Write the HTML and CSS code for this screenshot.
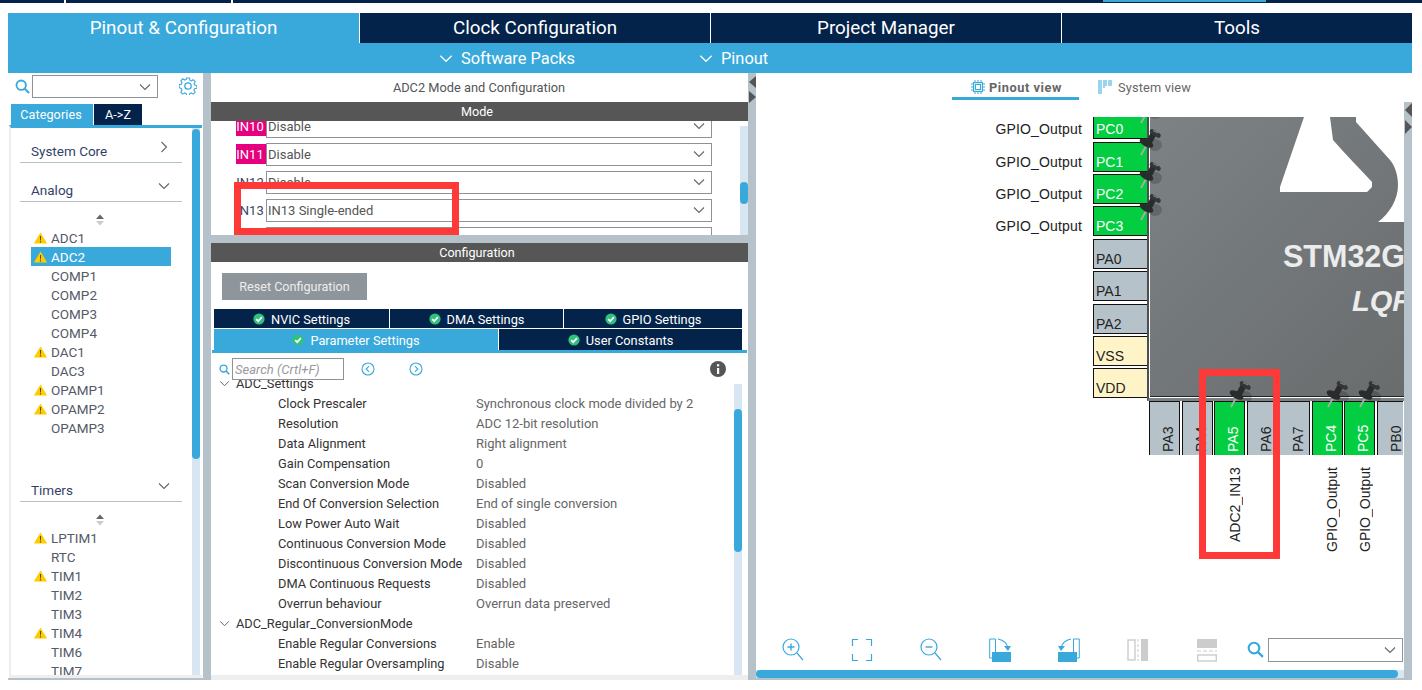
FILE: index.html
```html
<!DOCTYPE html>
<html lang="en">
<head>
<meta charset="utf-8">
<title>STM32CubeMX</title>
<link rel="stylesheet" href="styles.css">
</head>
<body>
<svg class="defs" width="0" height="0" aria-hidden="true">
  <symbol id="warn" viewBox="0 0 14 12"><path d="M7 .5 13.6 11.5H.4Z" fill="#fc0"/><path d="M6.4 4h1.2l-.2 4.4h-.8ZM6.4 9.2h1.2v1.2H6.4Z" fill="#5a4a00"/></symbol>
  <symbol id="check" viewBox="0 0 12 12"><circle cx="6" cy="6" r="5.6" fill="#2fc27a"/><path d="M3.2 6.2 5.2 8.2 8.9 4.2" fill="none" stroke="#fff" stroke-width="1.7"/></symbol>
  <symbol id="chev" viewBox="0 0 12 8"><path d="M1 1.5 6 6.5 11 1.5" fill="none" stroke="currentColor" stroke-width="1.1"/></symbol>
  <symbol id="mag" viewBox="0 0 16 16"><circle cx="6.6" cy="6.6" r="5" fill="none" stroke="#39a9dc" stroke-width="2"/><path d="M10.4 10.4 15 15" stroke="#39a9dc" stroke-width="2.2"/></symbol>
  <symbol id="sort" viewBox="0 0 10 12"><path d="M5 .5 9 5H1Z" fill="#666"/><path d="M5 11.500 9 7H1Z" fill="#ccc"/></symbol>
  <symbol id="push" viewBox="0 0 24 28"><ellipse cx="17" cy="17" rx="7" ry="6" fill="#000" opacity=".18"/><path d="M3 27 8 18" stroke="#a6ada8" stroke-width="1.8"/><path d="M16 5 10.500 15" stroke="#2a2c2c" stroke-width="6"/><ellipse cx="8.500" cy="15" rx="7.500" ry="3.600" transform="rotate(28 8.500 15)" fill="#2a2c2c"/><path d="M14 3.500 20.500 7.500" stroke="#333737" stroke-width="4.600" stroke-linecap="round"/><path d="M15 2.600 20 5" stroke="#8b9090" stroke-width="1"/></symbol>
</svg>

<div class="topstrip"><span class="topmark topmark-a"></span><span class="topmark topmark-b"></span><span class="topstrip-active"></span></div>

<nav class="tabs">
  <div class="tab tab-on">Pinout &amp; Configuration</div>
  <div class="tab">Clock Configuration</div>
  <div class="tab">Project Manager</div>
  <div class="tab">Tools</div>
</nav>
<div class="subbar">
  <span class="sub sub-packs"><svg class="sub-chev"><use href="#chev"/></svg>Software Packs</span>
  <span class="sub"><svg class="sub-chev"><use href="#chev"/></svg>Pinout</span>
</div>

<main class="workspace">
  <aside class="side">
    <div class="side-search">
      <svg class="side-mag"><use href="#mag"/></svg>
      <div class="combo combo-side"><svg class="combo-chev"><use href="#chev"/></svg></div>
      <svg class="gear" viewBox="0 0 18 18"><path d="M7.6 1h2.8l.4 2.2 1.5.7 1.9-1.2 2 2-1.2 1.9.7 1.5 2.2.4v2.8l-2.2.4-.7 1.5 1.2 1.9-2 2-1.9-1.2-1.5.7-.4 2.2H7.600l-.4-2.2-1.500-.7-1.900 1.200-2-2 1.200-1.900-.7-1.500L.1 10.400V7.600l2.200-.4.7-1.500-1.200-1.900 2-2 1.900 1.200 1.500-.7Z" fill="none" stroke="#39a9dc" stroke-width="1.1"/><circle cx="9" cy="9" r="3.2" fill="none" stroke="#39a9dc" stroke-width="1.3"/></svg>
    </div>
    <div class="side-tabs"><span class="stab stab-on">Categories</span><span class="stab">A-&gt;Z</span></div>
    <div class="side-body">
      <div class="side-list">
        <div class="cat cat-first">System Core<svg class="cat-right" viewBox="0 0 8 12"><path d="M1.500 1 6.500 6 1.500 11" fill="none" stroke="#666" stroke-width="1.1"/></svg></div>
        <div class="cat">Analog<svg class="cat-down"><use href="#chev"/></svg></div>
        <svg class="sorter"><use href="#sort"/></svg>
        <ul class="items">
          <li class="item"><svg class="warn"><use href="#warn"/></svg>ADC1</li>
          <li class="item item-on"><svg class="warn"><use href="#warn"/></svg>ADC2</li>
          <li class="item">COMP1</li>
          <li class="item">COMP2</li>
          <li class="item">COMP3</li>
          <li class="item">COMP4</li>
          <li class="item"><svg class="warn"><use href="#warn"/></svg>DAC1</li>
          <li class="item">DAC3</li>
          <li class="item"><svg class="warn"><use href="#warn"/></svg>OPAMP1</li>
          <li class="item"><svg class="warn"><use href="#warn"/></svg>OPAMP2</li>
          <li class="item">OPAMP3</li>
        </ul>
        <div class="cat cat-timers">Timers<svg class="cat-down"><use href="#chev"/></svg></div>
        <svg class="sorter"><use href="#sort"/></svg>
        <ul class="items">
          <li class="item"><svg class="warn"><use href="#warn"/></svg>LPTIM1</li>
          <li class="item">RTC</li>
          <li class="item"><svg class="warn"><use href="#warn"/></svg>TIM1</li>
          <li class="item">TIM2</li>
          <li class="item">TIM3</li>
          <li class="item"><svg class="warn"><use href="#warn"/></svg>TIM4</li>
          <li class="item">TIM6</li>
          <li class="item">TIM7</li>
        </ul>
      </div>
      <div class="vscroll vscroll-side"><span class="thumb thumb-side"></span></div>
    </div>
  </aside>

  <div class="splitter"></div>

  <section class="mid">
    <div class="mid-title">ADC2 Mode and Configuration</div>
    <div class="bar">Mode</div>
    <div class="mode">
      <div class="mode-rows">
        <div class="mode-row"><span class="in in-on">IN10</span><div class="combo combo-mode">Disable<svg class="combo-chev"><use href="#chev"/></svg></div></div>
        <div class="mode-row"><span class="in in-on">IN11</span><div class="combo combo-mode">Disable<svg class="combo-chev"><use href="#chev"/></svg></div></div>
        <div class="mode-row"><span class="in">IN12</span><div class="combo combo-mode">Disable<svg class="combo-chev"><use href="#chev"/></svg></div></div>
        <div class="mode-row"><span class="in">IN13</span><div class="combo combo-mode">IN13 Single-ended<svg class="combo-chev"><use href="#chev"/></svg></div></div>
        <div class="mode-row"><span class="in"></span><div class="combo combo-mode"></div></div>
      </div>
      <div class="vscroll vscroll-mode"><span class="thumb thumb-mode"></span></div>
    </div>
    <div class="hsplit"></div>
    <div class="bar">Configuration</div>
    <div class="reset-wrap"><button class="reset" type="button">Reset Configuration</button></div>
    <div class="ctabs ctabs-top">
      <span class="ctab ctab-a"><svg class="check"><use href="#check"/></svg>NVIC Settings</span>
      <span class="ctab ctab-b"><svg class="check"><use href="#check"/></svg>DMA Settings</span>
      <span class="ctab ctab-c"><svg class="check"><use href="#check"/></svg>GPIO Settings</span>
    </div>
    <div class="ctabs ctabs-bottom">
      <span class="ctab ctab-d ctab-on"><svg class="check"><use href="#check"/></svg>Parameter Settings</span>
      <span class="ctab ctab-e"><svg class="check"><use href="#check"/></svg>User Constants</span>
    </div>
    <div class="csearch">
      <svg class="csearch-mag"><use href="#mag"/></svg>
      <div class="cinput">Search (Crtl+F)</div>
      <svg class="nav-circle nav-prev" viewBox="0 0 14 14"><circle cx="7" cy="7" r="6" fill="none" stroke="#39a9dc" stroke-width="1.1"/><path d="M8 4.200 5.200 7 8 9.800" fill="none" stroke="#39a9dc" stroke-width="1.1"/></svg>
      <svg class="nav-circle nav-next" viewBox="0 0 14 14"><circle cx="7" cy="7" r="6" fill="none" stroke="#39a9dc" stroke-width="1.1"/><path d="M6 4.200 8.800 7 6 9.800" fill="none" stroke="#39a9dc" stroke-width="1.1"/></svg>
      <svg class="info" viewBox="0 0 16 16"><circle cx="8" cy="8" r="8" fill="#555655"/><rect x="7" y="7" width="2.200" height="6" fill="#fff"/><rect x="7" y="3.200" width="2.200" height="2.200" fill="#fff"/></svg>
    </div>
    <div class="tree-wrap">
      <div class="tree">
        <div class="sec"><svg class="sec-chev"><use href="#chev"/></svg>ADC_Settings</div>
        <div class="prop"><span>Clock Prescaler</span><span class="val">Synchronous clock mode divided by 2</span></div>
        <div class="prop"><span>Resolution</span><span class="val">ADC 12-bit resolution</span></div>
        <div class="prop"><span>Data Alignment</span><span class="val">Right alignment</span></div>
        <div class="prop"><span>Gain Compensation</span><span class="val">0</span></div>
        <div class="prop"><span>Scan Conversion Mode</span><span class="val">Disabled</span></div>
        <div class="prop"><span>End Of Conversion Selection</span><span class="val">End of single conversion</span></div>
        <div class="prop"><span>Low Power Auto Wait</span><span class="val">Disabled</span></div>
        <div class="prop"><span>Continuous Conversion Mode</span><span class="val">Disabled</span></div>
        <div class="prop"><span>Discontinuous Conversion Mode</span><span class="val">Disabled</span></div>
        <div class="prop"><span>DMA Continuous Requests</span><span class="val">Disabled</span></div>
        <div class="prop"><span>Overrun behaviour</span><span class="val">Overrun data preserved</span></div>
        <div class="sec"><svg class="sec-chev"><use href="#chev"/></svg>ADC_Regular_ConversionMode</div>
        <div class="prop"><span>Enable Regular Conversions</span><span class="val">Enable</span></div>
        <div class="prop"><span>Enable Regular Oversampling</span><span class="val">Disable</span></div>
      </div>
      <div class="vscroll vscroll-tree"><span class="thumb thumb-tree"></span></div>
    </div>
  </section>

  <div class="splitter"><span class="arrow arrow-l"></span><span class="arrow arrow-r"></span></div>

  <section class="view">
    <div class="view-main">
      <div class="view-tabs">
        <span class="vtab vtab-on">
          <svg class="vicon" viewBox="0 0 14 14"><rect x="2.500" y="2.500" width="9" height="9" fill="#d4ecf8" stroke="#39a9dc"/><rect x="4.500" y="4.500" width="5" height="5" fill="#fff" stroke="#39a9dc"/><path d="M4 0v2M7 0v2M10 0v2M4 12v2M7 12v2M10 12v2M0 4h2M0 7h2M0 10h2M12 4h2M12 7h2M12 10h2" stroke="#39a9dc"/></svg>Pinout view</span>
        <span class="vtab">
          <svg class="vicon" viewBox="0 0 14 14"><path d="M0 1h4M0 3h4M0 5h4M0 7h4M0 9h4M0 11h4M0 13h4M5 1h4M5 3h4M5 5h4M5 7h2M10 1h4M10 3h4M10 5h4" stroke="#39a9dc"/></svg>System view</span>
      </div>
      <div class="canvas">
        <div class="chip">
          <svg class="chip-logo" viewBox="0 0 124 105"><path d="M24 0H50L53 23C66 38 80 52 92 65V70L87 75H0V70Z" fill="#fff"/><path d="M76 0V5L110 43C116 50 118 60 118 68 118 82 110 96 98 105H124V0Z" fill="#fff"/></svg>
          <div class="chip-name">STM32G4</div>
          <div class="chip-pkg">LQFP64</div>
        </div>
        <div class="lpins">
          <div class="lrow"><span class="plabel">GPIO_Output</span><span class="pin pin-on">PC0</span></div>
          <div class="lrow"><span class="plabel">GPIO_Output</span><span class="pin pin-on">PC1</span></div>
          <div class="lrow"><span class="plabel">GPIO_Output</span><span class="pin pin-on">PC2</span></div>
          <div class="lrow"><span class="plabel">GPIO_Output</span><span class="pin pin-on">PC3</span></div>
          <div class="lrow"><span class="pin">PA0</span></div>
          <div class="lrow"><span class="pin">PA1</span></div>
          <div class="lrow"><span class="pin">PA2</span></div>
          <div class="lrow"><span class="pin pin-pwr">VSS</span></div>
          <div class="lrow"><span class="pin pin-pwr">VDD</span></div>
        </div>
        <div class="bpins">
          <div class="bcol"><span class="bpin">PA3</span></div>
          <div class="bcol"><span class="bpin">PA4</span></div>
          <div class="bcol"><span class="bpin pin-on">PA5</span><span class="blabel">ADC2_IN13</span></div>
          <div class="bcol"><span class="bpin">PA6</span></div>
          <div class="bcol"><span class="bpin">PA7</span></div>
          <div class="bcol"><span class="bpin pin-on">PC4</span><span class="blabel">GPIO_Output</span></div>
          <div class="bcol"><span class="bpin pin-on">PC5</span><span class="blabel">GPIO_Output</span></div>
          <div class="bcol"><span class="bpin">PB0</span></div>
        </div>
        <svg class="pushpin pp0"><use href="#push"/></svg>
        <svg class="pushpin pp1"><use href="#push"/></svg>
        <svg class="pushpin pp2"><use href="#push"/></svg>
        <svg class="pushpin pp3"><use href="#push"/></svg>
        <svg class="pushpin pp4"><use href="#push"/></svg>
        <svg class="pushpin pp5"><use href="#push"/></svg>
        <svg class="pushpin pp6"><use href="#push"/></svg>
      </div>
      <div class="tools">
        <svg class="tool" viewBox="0 0 22 24"><circle cx="9" cy="9" r="8" fill="none" stroke="#39a9dc" stroke-width="1.200"/><path d="M9 5.500v7M5.500 9h7" stroke="#39a9dc" stroke-width="1.400"/><path d="M15 15 21 22" stroke="#39a9dc" stroke-width="1.200"/></svg>
        <svg class="tool" viewBox="0 0 22 24"><path d="M7 1.500H1.500V8M15 1.500h5.500V8M7 22.500H1.500V16M15 22.500h5.500V16" fill="none" stroke="#39a9dc" stroke-width="1.200"/></svg>
        <svg class="tool" viewBox="0 0 22 24"><circle cx="9" cy="9" r="8" fill="none" stroke="#39a9dc" stroke-width="1.200"/><path d="M5.500 9h7" stroke="#39a9dc" stroke-width="1.400"/><path d="M15 15 21 22" stroke="#39a9dc" stroke-width="1.200"/></svg>
        <svg class="tool" viewBox="0 0 22 24"><path d="M.7 1H6.500V20H.7Z" fill="none" stroke="#39a9dc"/><path d="M3 14H22V24H3Z" fill="#39a9dc"/><path d="M9 1C14 2 18 5 19 10" fill="none" stroke="#39a9dc" stroke-width="1.200"/><path d="M15 8h7l-3 5Z" fill="#39a9dc"/></svg>
        <svg class="tool" viewBox="0 0 22 24"><path d="M15.500 1H21.300V20H15.500Z" fill="none" stroke="#39a9dc"/><path d="M0 14H19V24H0Z" fill="#39a9dc"/><path d="M13 1C8 2 4 5 3 10" fill="none" stroke="#39a9dc" stroke-width="1.200"/><path d="M0 8h7l-4 5Z" fill="#39a9dc"/></svg>
        <svg class="tool" viewBox="0 0 22 24"><rect x="1" y="2" width="7" height="20" fill="none" stroke="#ccc" stroke-width="1.400"/><path d="M11 1v22" stroke="#ccc" stroke-dasharray="3 2"/><rect x="14" y="1" width="7" height="22" fill="#ccc"/></svg>
        <svg class="tool" viewBox="0 0 22 24"><rect x="1" y="1" width="20" height="9" fill="#ccc"/><path d="M1 13h20" stroke="#ccc" stroke-dasharray="4 2"/><rect x="1.700" y="17" width="18.600" height="6" fill="none" stroke="#ccc" stroke-width="1.400"/></svg>
        <svg class="tools-mag"><use href="#mag"/></svg>
        <div class="combo combo-tools"><svg class="combo-chev"><use href="#chev"/></svg></div>
      </div>
      <div class="hscroll"><span class="hthumb"></span></div>
    </div>
    <div class="view-edge"><span class="arrow edge-l"></span><span class="arrow edge-r"></span></div>
  </section>
</main>

<div class="callout callout-mode"></div>
<div class="callout callout-pin"></div>
</body>
</html>
```
FILE: styles.css
```css
* { box-sizing: border-box; }
html, body { margin: 0; padding: 0; }
body {
  position: relative;
  width: 1422px;
  height: 690px;
  overflow: hidden;
  background: #fff;
  font-family: Roboto, "Liberation Sans", sans-serif;
  font-size: 13px;
  color: #555;
}
.defs { position: absolute; }
svg { display: block; flex: none; }

.topstrip { position: relative; height: 3px; background: #03234b; padding-left: 1103px; margin-bottom: 10px; }
.topstrip-active { display: block; width: 163px; height: 2px; background: #39a9dc; }
.topmark { position: absolute; top: 0; width: 2px; height: 3px; background: #fff; }
.topmark-a { left: 64px; }
.topmark-b { left: 231px; }

.tabs { display: flex; height: 30px; margin: 0 10px 0 8px; background: #03234b; color: #fff; font-size: 18.8px; }
.tab { flex: 0 0 351px; display: flex; align-items: center; justify-content: center; border-left: 1px solid #fff; }
.tab:last-child { flex: 1; }
.tab-on { background: #39a9dc; border-left: 0; }

.subbar { display: flex; height: 30px; margin: 0 10px 0 8px; padding-left: 431px; align-items: center; background: #39a9dc; color: #fff; font-size: 16.4px; }
.sub { display: flex; align-items: center; }
.sub-packs { width: 260px; }
.sub-chev { width: 14px; height: 9px; margin-right: 8px; color: #fff; }

.workspace { display: flex; height: 607px; margin: 0 10px 0 8px; }
.splitter { position: relative; flex: 0 0 8px; background: #b6c2c9; }
.arrow { position: absolute; left: 1px; width: 0; height: 0; border-style: solid; }
.arrow-l { top: 3px; border-width: 6px 7px 6px 0; border-color: transparent #555 transparent transparent; }
.arrow-r { top: 18px; border-width: 6px 0 6px 7px; border-color: transparent transparent transparent #555; }
.edge-l { top: 1px; border-width: 7px 7px 7px 0; border-color: transparent #555 transparent transparent; }
.edge-r { top: 18px; border-width: 7px 0 7px 7px; border-color: transparent transparent transparent #555; }

/* left list */
.side { flex: 0 0 195px; display: flex; flex-direction: column; border-bottom: 2px solid #b6c2c9; }
.side-search { display: flex; align-items: flex-start; height: 31px; padding: 2px 0 0 7px; }
.side-mag { width: 15px; height: 15px; margin: 4px 2px 0 0; }
.combo { position: relative; border: 1px solid #8f9396; background: #fff; color: #555; }
.combo-side { width: 126px; height: 23px; }
.combo-chev { position: absolute; right: 6px; top: 50%; width: 12px; height: 8px; margin-top: -4px; color: #666; }
.gear { width: 18px; height: 18px; margin: 2px 0 0 21px; }
.side-tabs { display: flex; height: 21px; padding-left: 3px; color: #fff; font-size: 12.6px; letter-spacing: .1px; gap: 1px; }
.stab { width: 48px; display: flex; align-items: center; justify-content: center; background: #03234b; }
.stab-on { width: 82px; padding-right: 2px; background: #39a9dc; }
.side-body { flex: 1; min-height: 0; display: flex; border-top: 3px solid #39a9dc; border-left: 2px solid #eee; margin: 0 1px; border-bottom: 3px solid #eee; }
.side-list { flex: 1; min-width: 0; overflow: hidden; padding: 10px 10px 0 9px; }
.cat { position: relative; height: 25px; padding: 5px 0 0 11px; border-bottom: 1px solid #b6c2c9; color: #333f68; font-size: 13.5px; }
.cat + .cat { margin-top: 14px; }
.cat-timers { margin-top: 40px; }
.cat-right { position: absolute; right: 14px; top: 3px; width: 8px; height: 12px; }
.cat-down { position: absolute; right: 12px; top: 5px; width: 12px; height: 8px; color: #666; }
.sorter { width: 10px; height: 12px; margin: 12px 0 0 75px; }
.items { list-style: none; margin: 2px 0 0; padding: 0; }
.item { display: flex; align-items: center; height: 19px; padding-left: 20px; margin-left: 11px; width: 140px; color: #555a68; font-size: 13.5px; position: relative; }
.item-on { background: #39a9dc; color: #fff; }
.warn { position: absolute; left: 2px; top: 4px; width: 15px; height: 12px; }
.vscroll { position: relative; background: #d8e6f3; }
.thumb { position: absolute; left: 0; right: 0; background: #39a9dc; border-radius: 4px; }
.vscroll-side { flex: 0 0 8px; margin-right: 2px; }
.thumb-side { top: 1px; height: 330px; }

/* middle */
.mid { flex: 0 0 537px; display: flex; flex-direction: column; }
.mid-title { height: 29px; display: flex; align-items: center; justify-content: center; padding-right: 1px; font-size: 12.8px; }
.bar { flex: none; height: 19px; display: flex; align-items: center; justify-content: center; padding-right: 5px; background: #555655; color: #fff; font-size: 12.6px; }
.mode { display: flex; height: 114px; overflow: hidden; }
.mode-rows { flex: 1; margin-top: -9px; padding-left: 25px; }
.mode-row { display: flex; align-items: center; height: 28px; width: 476px; }
.in { flex: 0 0 30px; height: 20px; padding-right: 2px; display: flex; align-items: center; justify-content: center; color: #3b4568; font-size: 13px; }
.in-on { background: #e6007e; color: #fff; }
.combo-mode { flex: 1; height: 23px; padding-left: 1px; display: flex; align-items: center; font-size: 13px; }
.vscroll-mode { flex: 0 0 8px; margin-top: 5px; }
.thumb-mode { top: 56px; height: 22px; }
.hsplit { flex: 0 0 8px; background: #b6c2c9; }
.reset-wrap { flex: none; padding: 11px 0 9px 11px; }
.reset { display: block; width: 145px; height: 27px; padding: 0; border: 0; background: #8f969b; color: #ececec; font: inherit; font-size: 12.6px; }
.ctabs { display: flex; margin-left: 3px; width: 528px; color: #fff; font-size: 12.8px; gap: 1px; }
.ctabs-top { height: 19px; margin-bottom: 1px; }
.ctabs-bottom { height: 21px; }
.ctab { display: flex; align-items: center; justify-content: center; background: #03234b; padding-top: 1px; }
.ctab-a { width: 175px; }
.ctab-b { width: 173px; }
.ctab-c { flex: 1; }
.ctab-d { width: 284px; }
.ctab-e { flex: 1; }
.ctab-on { background: #39a9dc; }
.check { width: 12px; height: 12px; margin-right: 6px; }
.csearch { position: relative; flex: none; height: 30px; margin: 0 1px; padding: 5px 0 0 7px; border-top: 3px solid #39a9dc; display: flex; align-items: center; }
.csearch-mag { width: 11px; height: 11px; margin-right: 2px; }
.cinput { width: 112px; height: 22px; border: 1px solid #8f9396; padding-left: 2px; display: flex; align-items: center; color: #9a9a9a; font-style: italic; font-size: 13px; }
.nav-circle { position: absolute; top: 9px; width: 14px; height: 14px; }
.nav-prev { left: 149px; }
.nav-next { left: 197px; }
.info { position: absolute; left: 498px; top: 8px; width: 16px; height: 16px; }
.tree-wrap { flex: 1; min-height: 0; display: flex; overflow: hidden; padding-right: 6px; border-bottom: 5px solid #eee; }
.tree { flex: 1; margin-top: -7px; }
.sec { position: relative; height: 20px; padding-left: 25px; display: flex; align-items: center; color: #333; font-size: 12.8px; }
.sec-chev { position: absolute; left: 8px; top: 7px; width: 11px; height: 7px; color: #666; }
.prop { display: flex; height: 20px; align-items: center; padding-left: 67px; color: #333; font-size: 12.8px; }
.prop > span:first-child { flex: 0 0 198px; }
.val { color: #666; font-size: 13px; }
.vscroll-tree { flex: 0 0 8px; margin-top: 4px; }
.thumb-tree { top: 25px; height: 143px; }

/* right */
.view { flex: 1; min-width: 0; display: flex; border-bottom: 2px solid #b6c2c9; }
.view-main { flex: 1; min-width: 0; display: flex; flex-direction: column; }
.view-edge { position: relative; flex: 0 0 8px; margin-top: 29px; background: #b6c2c9; }
.view-tabs { flex: none; height: 44px; display: flex; padding: 1px 0 0 196px; font-size: 12.8px; color: #666; }
.vtab { width: 127px; height: 26px; display: flex; align-items: center; padding-left: 19px; letter-spacing: .15px; }
.vtab-on { border-bottom: 3px solid #39a9dc; font-weight: 700; letter-spacing: .55px; padding-top: 3px; }
.vicon { width: 14px; height: 14px; margin-right: 6px; }
.vtab-on .vicon { margin-right: 4px; }
.canvas { position: relative; flex: 1; min-height: 0; overflow: hidden; }
.chip { position: absolute; left: 391px; top: 0; width: 260px; height: 284px; overflow: hidden; background: linear-gradient(135deg, #7d8285, #686c6d); border-left: 2px solid #4b4f50; border-bottom: 3px solid #7c8184; box-shadow: inset 1px -1px 0 #fff, inset 0 -2px 0 #222; }
.chip-logo { position: absolute; left: 131px; top: 0; width: 124px; height: 105px; overflow: visible; }
.chip-name { position: absolute; left: 134px; top: 122px; color: #ececec; font: 700 30.5px "Liberation Sans", sans-serif; white-space: nowrap; }
.chip-pkg { position: absolute; left: 203px; top: 168px; color: #ececec; font: italic 700 29px "Liberation Sans", sans-serif; white-space: nowrap; }
.lpins { position: absolute; right: 257px; top: -9px; display: flex; flex-direction: column; }
.lrow { display: flex; align-items: center; justify-content: flex-end; height: 32.4px; }
.plabel { margin-right: 11px; margin-top: 10px; color: #222; font: 14px "Liberation Sans", sans-serif; letter-spacing: .15px; }
.pin { display: flex; align-items: flex-end; width: 54px; height: 30px; padding: 0 0 0 2px; border: 1px solid #111; border-width: 1px 0 1px 1px; background: #b6c2c9; color: #222; font: 14px/18px "Liberation Sans", sans-serif; }
.pin-on { background: #03ce42; color: #fff; }
.pin-pwr { background: #fff4c8; }
.bpins { position: absolute; left: 393px; top: 284px; width: 254px; display: flex; overflow: hidden; height: 160px; }
.bcol { position: relative; flex: 0 0 32.55px; height: 160px; }
.bpin { position: absolute; left: 0; top: 0; width: 31px; height: 54px; padding: 3px 10px 0 0; border: 1px solid #111; border-top: 0; background: #b6c2c9; color: #222; font: 14px/16px "Liberation Sans", sans-serif; writing-mode: vertical-rl; transform: rotate(180deg); text-align: left; }
.bpin.pin-on { background: #03ce42; color: #fff; }
.blabel { position: absolute; left: 10.500px; top: 66px; height: 86px; width: 20px; color: #222; font: 14px/20px "Liberation Sans", sans-serif; writing-mode: vertical-rl; transform: rotate(180deg); text-align: right; }
.pushpin { position: absolute; width: 24px; height: 28px; }
.pp0 { left: 382px; top: -21px; }
.pp1 { left: 382px; top: 11px; }
.pp2 { left: 382px; top: 44px; }
.pp3 { left: 382px; top: 76px; }
.pp4 { left: 472px; top: 263px; }
.pp5 { left: 569px; top: 263px; }
.pp6 { left: 601px; top: 263px; }
.tools { position: relative; flex: none; height: 36px; display: flex; align-items: center; padding: 0 0 4px 26px; gap: 47px; }
.tool { width: 22px; height: 24px; }
.tools-mag { position: absolute; left: 491px; top: 7px; width: 17px; height: 17px; }
.combo-tools { position: absolute; left: 512px; top: 4px; width: 135px; height: 24px; }
.hscroll { position: relative; flex: none; height: 8px; background: #d8e6f3; }
.hthumb { position: absolute; left: 0; top: 0; bottom: 0; width: 642px; background: #39a9dc; border-radius: 4px; }

.callout { position: absolute; border: 7px solid #ff3838; }
.callout-mode { left: 234px; top: 182px; width: 225px; height: 53px; }
.callout-pin { left: 1199px; top: 369px; width: 81px; height: 190px; }
```
